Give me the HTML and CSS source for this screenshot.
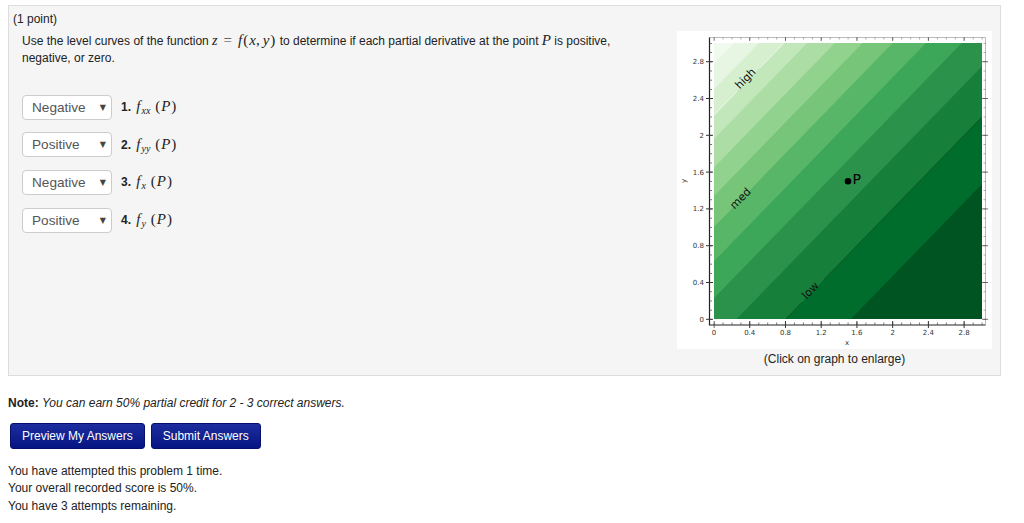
FILE: index.html
```html
<!DOCTYPE html>
<html lang="en">
<head>
    <meta charset="UTF-8">
    <meta name="viewport" content="width=device-width, initial-scale=1.0">
    <title>Level curves problem</title>
    <link rel="stylesheet" href="styles.css">
</head>
<body>
<div class="page">
    <div class="problem">
        <div class="points">(1 point)</div>
        <div class="problem-body">
            <div class="problem-left">
                <p class="prompt">Use the level curves of the function <span class="math"><i class="sm">z</i><span class="eq">=</span><i>f</i><span class="paren">(</span><i>x</i>,&thinsp;<i>y</i><span class="paren">)</span></span> to determine if each partial derivative at the point <span class="math"><i>P</i></span> is positive, negative, or zero.</p>

                <div class="answers">
                    <div class="row">
                        <div class="select"><span>Negative</span><span class="arrow">▼</span></div>
                        <span class="label"><b>1.</b> <span class="math"><i>f</i><sub><i>xx</i></sub> <span class="paren">(</span><i>P</i><span class="paren">)</span></span></span>
                    </div>
                    <div class="row">
                        <div class="select"><span>Positive</span><span class="arrow">▼</span></div>
                        <span class="label"><b>2.</b> <span class="math"><i>f</i><sub><i>yy</i></sub> <span class="paren">(</span><i>P</i><span class="paren">)</span></span></span>
                    </div>
                    <div class="row">
                        <div class="select"><span>Negative</span><span class="arrow">▼</span></div>
                        <span class="label"><b>3.</b> <span class="math"><i>f</i><sub><i>x</i></sub> <span class="paren">(</span><i>P</i><span class="paren">)</span></span></span>
                    </div>
                    <div class="row">
                        <div class="select"><span>Positive</span><span class="arrow">▼</span></div>
                        <span class="label"><b>4.</b> <span class="math"><i>f</i><sub><i>y</i></sub> <span class="paren">(</span><i>P</i><span class="paren">)</span></span></span>
                    </div>
                </div>
            </div>

            <div class="graph">
                <svg class="plot" width="315" height="318" viewBox="0 0 315 318">
                    <defs>
                        <clipPath id="plotArea"><rect x="37" y="12" width="268" height="276"/></clipPath>
                        <pattern id="minX" patternUnits="userSpaceOnUse" x="36.6" y="0" width="8.933" height="20"><rect width="0.8" height="20" fill="#555"/></pattern>
                        <pattern id="majX" patternUnits="userSpaceOnUse" x="36.5" y="0" width="35.73" height="20"><rect width="1" height="20" fill="#333"/></pattern>
                        <pattern id="minY" patternUnits="userSpaceOnUse" x="0" y="287.9" width="20" height="9.2"><rect width="20" height="0.8" fill="#555"/></pattern>
                        <pattern id="majY" patternUnits="userSpaceOnUse" x="0" y="287.8" width="20" height="36.8"><rect width="20" height="1" fill="#333"/></pattern>
                    </defs>

                    <!-- filled level bands, y - x = c -->
                    <g clip-path="url(#plotArea)">
                        <rect x="37" y="12" width="268" height="276" fill="#f1faee"/>
                        <g transform="matrix(89.33 0 0 -92 37 288.3)">
                            <polygon points="-1,1.78 4,6.78 4,-5 -1,-5" fill="#e6f6e2"/>
                            <polygon points="-1,1.5 4,6.5 4,-5 -1,-5" fill="#d5efcf"/>
                            <polygon points="-1,1.22 4,6.22 4,-5 -1,-5" fill="#c2e7bb"/>
                            <polygon points="-1,0.96 4,5.96 4,-5 -1,-5" fill="#abdda5"/>
                            <polygon points="-1,0.65 4,5.65 4,-5 -1,-5" fill="#91d28e"/>
                            <polygon points="-1,0.34 4,5.34 4,-5 -1,-5" fill="#76c578"/>
                            <polygon points="-1,0 4,5 4,-5 -1,-5" fill="#57b668"/>
                            <polygon points="-1,-0.37 4,4.63 4,-5 -1,-5" fill="#3ca659"/>
                            <polygon points="-1,-0.77 4,4.23 4,-5 -1,-5" fill="#2a924a"/>
                            <polygon points="-1,-1.25 4,3.75 4,-5 -1,-5" fill="#16803b"/>
                            <polygon points="-1,-1.8 4,3.2 4,-5 -1,-5" fill="#016d2c"/>
                            <polygon points="-1,-2.53 4,2.47 4,-5 -1,-5" fill="#005422"/>
                        </g>

                        <!-- labelled contours -->
                        <g fill="none" stroke-width="0.8">
                            <path d="M37 84.1 L60 60.4 M83 36.7 L106.7 12.3" stroke="#f4fbf2"/>
                            <path d="M37 196.3 L55 177.8 M77 155.1 L215.7 12.3" stroke="#5fb96a"/>
                            <path d="M108.5 288.3 L125 271.3 M147 248.6 L305 85.9" stroke="#0c4f25"/>
                        </g>
                    </g>

                    <g class="clabel">
                        <text transform="translate(71 50) rotate(-45.8)" text-anchor="middle">high</text>
                        <text transform="translate(66 170) rotate(-45.8)" text-anchor="middle">med</text>
                        <text transform="translate(136 262) rotate(-45.8)" text-anchor="middle">low</text>
                    </g>

                    <circle cx="171" cy="150.3" r="3.3" fill="#000"/>
                    <text class="plabel" x="175.5" y="152.5">P</text>

                    <!-- frame and ticks -->
                    <path d="M32.5 6.5 H308.5 V294" fill="none" stroke="#aaa" stroke-width="0.8"/>
                    <path d="M32.5 6.5 V294 H308.5" fill="none" stroke="#222" stroke-width="1.2"/>
                    <rect x="36.5" y="291.5" width="270" height="2.5" fill="url(#minX)"/>
                    <rect x="36.5" y="290" width="252" height="7" fill="url(#majX)"/>
                    <rect x="36.5" y="6.5" width="270" height="2" fill="url(#minX)" opacity="0.6"/>
                    <rect x="36.5" y="6.5" width="252" height="3.5" fill="url(#majX)" opacity="0.7"/>
                    <rect x="32.5" y="11.5" width="2.5" height="278" fill="url(#minY)"/>
                    <rect x="29" y="29.5" width="7" height="260" fill="url(#majY)"/>
                    <rect x="306.5" y="11.5" width="2" height="278" fill="url(#minY)" opacity="0.6"/>
                    <rect x="305" y="29.5" width="6" height="260" fill="url(#majY)" opacity="0.7"/>

                    <g class="tick" text-anchor="end">
                        <text x="27" y="290.8">0</text>
                        <text x="27" y="254">0.4</text>
                        <text x="27" y="217.2">0.8</text>
                        <text x="27" y="180.4">1.2</text>
                        <text x="27" y="143.6">1.6</text>
                        <text x="27" y="106.8">2</text>
                        <text x="27" y="70">2.4</text>
                        <text x="27" y="33.2">2.8</text>
                    </g>
                    <g class="tick" text-anchor="middle">
                        <text x="37" y="303.5">0</text>
                        <text x="72.7" y="303.5">0.4</text>
                        <text x="108.5" y="303.5">0.8</text>
                        <text x="144.2" y="303.5">1.2</text>
                        <text x="179.9" y="303.5">1.6</text>
                        <text x="215.7" y="303.5">2</text>
                        <text x="251.4" y="303.5">2.4</text>
                        <text x="287.1" y="303.5">2.8</text>
                    </g>
                    <text class="tick" x="170" y="313.5" text-anchor="middle">x</text>
                    <text class="tick" transform="translate(9 150) rotate(-90)" text-anchor="middle">y</text>
                </svg>
                <div class="caption">(Click on graph to enlarge)</div>
            </div>
        </div>
    </div>

    <p class="note"><b>Note:</b> <i>You can earn 50% partial credit for 2 - 3 correct answers.</i></p>

    <div class="buttons">
        <button class="btn">Preview My Answers</button>
        <button class="btn">Submit Answers</button>
    </div>

    <div class="status">
        <div>You have attempted this problem 1 time.</div>
        <div>Your overall recorded score is 50%.</div>
        <div>You have 3 attempts remaining.</div>
    </div>
</div>
</body>
</html>
```

FILE: styles.css
```css
body {
    margin: 0;
    font-family: "Liberation Sans", Arial, sans-serif;
    font-size: 12px;
    color: #222;
    background: #fff;
}
.page {
    padding: 5px 23px 10px 8px;
}
.problem {
    background-color: #f5f5f5;
    border: 1px solid #ddd;
    padding: 6px 8px 8px 4px;
}
.points {
    line-height: 15px;
}
.problem-body {
    display: flex;
    gap: 12px;
    margin-left: 9px;
    margin-top: 4px;
}
.problem-left {
    flex: 1;
}
.prompt {
    margin: 0;
    padding-top: 1.5px;
    max-width: 622px;
    line-height: 17px;
}
.math {
    font-family: "Liberation Serif", "DejaVu Serif", serif;
    font-size: 15px;
    line-height: 10px;
}
.math .paren {
    padding: 0 1px;
}
.math i.sm {
    font-size: 14px;
    padding-right: 1px;
}
.math .eq {
    color: #444;
    padding: 0 6px 0 5px;
}
.math sub {
    font-size: 10px;
    vertical-align: -3px;
    line-height: 0;
    padding-left: 1px;
}
.answers {
    display: flex;
    flex-direction: column;
    gap: 12.7px;
    margin-top: 28px;
}
.row {
    display: flex;
    align-items: center;
    gap: 9px;
    height: 25px;
}
.select {
    width: 90px;
    height: 25px;
    box-sizing: border-box;
    border: 1px solid #ccc;
    border-radius: 4px;
    background-color: #fff;
    display: flex;
    align-items: center;
    justify-content: space-between;
    padding: 0 5px 0 9px;
    font-size: 13.6px;
    color: #555;
}
.arrow {
    font-family: "DejaVu Sans", sans-serif;
    font-size: 8px;
    color: #444;
}
.label b {
    font-size: 12px;
    margin-right: 2px;
}
.graph {
    width: 315px;
}
.plot {
    display: block;
    background-color: #fff;
}
.tick {
    font-family: "DejaVu Sans", sans-serif;
    font-size: 7px;
    fill: #333;
}
.clabel {
    font-family: "DejaVu Sans", sans-serif;
    font-size: 11px;
    fill: #111;
}
.plabel {
    font-family: "DejaVu Sans", sans-serif;
    font-size: 14px;
    fill: #000;
}
.caption {
    text-align: center;
    line-height: 15px;
    margin-top: 2.5px;
}
.note {
    margin: 20px 0 0 0;
    line-height: 15px;
}
.buttons {
    display: flex;
    gap: 6px;
    margin-top: 12px;
    margin-left: 2px;
}
.btn {
    height: 26px;
    padding: 0 11px;
    font-family: "Liberation Sans", Arial, sans-serif;
    font-size: 12px;
    color: #fff;
    background: linear-gradient(#1d2d9e, #061582);
    border: 1px solid #06106a;
    border-radius: 3px;
}
.status {
    margin-top: 14.5px;
    line-height: 17.3px;
}
```
